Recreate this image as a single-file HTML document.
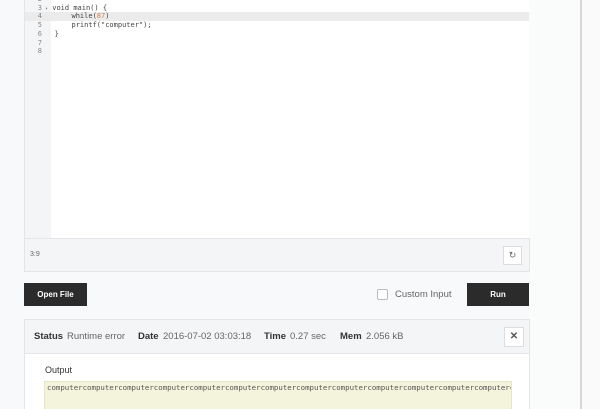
<!DOCTYPE html>
<html style="overflow:hidden;height:409px"><head><style>
body{margin:0;width:600px;height:409px;overflow:hidden;background:#f8f9fa;font-family:"Liberation Sans",sans-serif;position:relative}
.ed{position:absolute;left:24px;top:-1px;width:504px;height:239px;background:#fff;border:1px solid #e3e5e8;border-top:none}
.gut{position:absolute;left:0;top:0;width:26px;height:239px;background:#f4f5f6;}
.code{position:absolute;left:0;top:-4px;font-family:"DejaVu Sans Mono","Liberation Mono",monospace;font-size:7px;line-height:8.7px;color:#444}
.ln{position:absolute;width:520px;height:8.7px;white-space:pre}
.ln .n{display:inline-block;width:17px;text-align:right;color:#888}
.hl{background:#ebebeb}
.foot{position:absolute;left:24px;top:238px;width:504px;height:32px;background:#f4f5f6;border:1px solid #e3e5e8;font-size:7px;color:#666}
.btn{position:absolute;background:#2b2b2b;color:#fff;font-size:8px;font-weight:bold;text-align:center;line-height:23px;height:23px}
.sq{position:absolute;background:#fff;border:1px solid #ddd;width:18px;height:18px;text-align:center;font-size:10px;line-height:18px;color:#666}
.panel{position:absolute;left:24px;top:319px;width:504px;height:95px;background:#fff;border:1px solid #e3e5e8;overflow:hidden}
.ph{position:relative;height:33px;background:#f4f5f6;border-bottom:1px solid #e3e5e8;font-size:9.5px;color:#666;line-height:33px}
.ph span{position:absolute;top:0;white-space:nowrap}
.ph b{color:#333;position:absolute;top:0}
</style></head><body>
<div class="ed"><div class="gut"></div>
<div class="code">
<div class="ln" style="top:0"><span class="n">2</span></div>
<div class="ln" style="top:8.7px"><span class="n">3</span><span style="color:#888;font-size:5px"> ▾</span> void main() {</div>
<div class="ln hl" style="top:17.4px;width:504px"><span class="n">4</span>       while(<span style="color:#d2844d">87</span>)</div>
<div class="ln" style="top:26.1px"><span class="n">5</span>       printf("computer");</div>
<div class="ln" style="top:34.8px"><span class="n">6</span>   }</div>
<div class="ln" style="top:43.5px"><span class="n">7</span></div>
<div class="ln" style="top:52.2px"><span class="n">8</span></div>
</div></div>
<div style="position:absolute;left:529px;top:0;width:51px;height:409px;background:#fafbfb"></div>
<div style="position:absolute;left:580px;top:0;width:2px;height:409px;background:#d8d8d8"></div>
<div style="position:absolute;left:582px;top:0;width:18px;height:409px;background:#fafafa"></div>
<div class="foot"><span style="position:absolute;left:5px;top:12px">3:9</span><div class="sq" style="left:478px;top:7px;width:17px;height:17px;line-height:17px;font-size:9px">↻</div></div>
<div class="btn" style="left:24px;top:283px;width:63px">Open File</div>
<div style="position:absolute;left:377px;top:289px;width:9px;height:9px;border:1px solid #bbb;border-radius:2px;background:#fff"></div>
<div style="position:absolute;left:395px;top:289px;font-size:9.5px;color:#666">Custom Input</div>
<div class="btn" style="left:467px;top:283px;width:62px">Run</div>
<div class="panel"><div class="ph"><b style="left:9px">Status</b><span style="left:42px">Runtime error</span><b style="left:113px">Date</b><span style="left:138px">2016-07-02 03:03:18</span><b style="left:239px">Time</b><span style="left:265px">0.27 sec</span><b style="left:315px">Mem</b><span style="left:341px">2.056 kB</span></div>
<div class="sq" style="left:479px;top:7px;font-weight:bold;color:#555">✕</div>
<div style="position:absolute;left:20px;top:45px;font-size:9px;color:#333">Output</div>
<div style="position:absolute;left:19px;top:61px;width:462px;height:40px;background:#f4f4dc;border:1px solid #e5e5c8;font-family:'DejaVu Sans Mono',monospace;font-size:7.4px;color:#555;white-space:nowrap;overflow:hidden;padding:1px 2px">computercomputercomputercomputercomputercomputercomputercomputercomputercomputercomputercomputercomputercomputer</div>
</div>
</body></html>
